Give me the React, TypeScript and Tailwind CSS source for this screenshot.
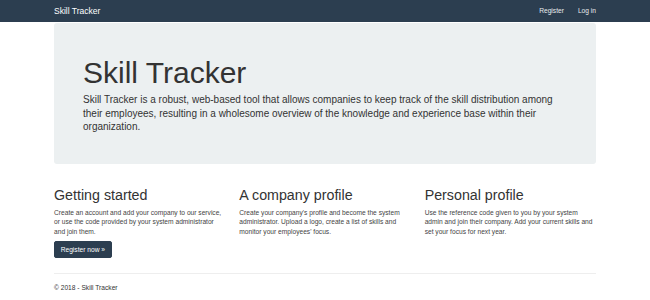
import React from "react";

export default function App() {
  const font = { fontFamily: '"Liberation Sans", Arial, Helvetica, sans-serif' };
  return (
    <div className="min-h-[300px] bg-white text-[#333]" style={font}>
      <nav className="h-[22px] bg-[#2c3e50]">
        <div className="mx-auto flex h-full w-[542px] items-center justify-between">
          <span className="text-[8.5px] leading-none text-white">Skill Tracker</span>
          <div className="flex items-center gap-[14px] text-[6.65px] leading-none text-[#e8ebee]">
            <span>Register</span>
            <span>Log in</span>
          </div>
        </div>
      </nav>
      <div className="mx-auto w-[542px]">
        <div className="mt-[1px] mb-[14px] rounded-[3px] bg-[#ecf0f1] px-[29px] pt-[23px] pb-[23px]">
          <h1 className="mt-[9.5px] mb-[4.75px] text-[30px] leading-[1.1] font-normal text-[#333]">
            Skill Tracker
          </h1>
          <p className="mb-[7px] text-[10px] leading-[13.6px] text-[#333]">
            Skill Tracker is a robust, web-based tool that allows companies to keep track of the skill distribution among
            their employees, resulting in a wholesome overview of the knowledge and experience base within their
            organization.
          </p>
        </div>
        <div className="mx-[-7px] grid grid-cols-3">
          <div className="px-[7px]">
            <h2 className="mt-[9.5px] mb-[4.75px] text-[14.25px] leading-[1.1] font-normal text-[#333]">
              Getting started
            </h2>
            <p className="mb-[4.75px] text-[6.65px] leading-[9.5px] text-[#444]">
              Create an account and add your company to our service, or use the code provided by your system administrator
              and join them.
            </p>
            <p className="mb-[4.75px] text-[6.65px] leading-[9.5px]">
              <span className="inline-block rounded-[2px] border border-[#2c3e50] bg-[#2c3e50] px-[5.7px] py-[2.85px] text-white">
                Register now »
              </span>
            </p>
          </div>
          <div className="px-[7px]">
            <h2 className="mt-[9.5px] mb-[4.75px] text-[14.25px] leading-[1.1] font-normal text-[#333]">
              A company profile
            </h2>
            <p className="mb-[4.75px] text-[6.65px] leading-[9.5px] text-[#444]">
              Create your company's profile and become the system administrator. Upload a logo, create a list of skills and
              monitor your employees' focus.
            </p>
          </div>
          <div className="px-[7px]">
            <h2 className="mt-[9.5px] mb-[4.75px] text-[14.25px] leading-[1.1] font-normal text-[#333]">
              Personal profile
            </h2>
            <p className="mb-[4.75px] text-[6.65px] leading-[9.5px] text-[#444]">
              Use the reference code given to you by your system admin and join their company. Add your current skills and
              set your focus for next year.
            </p>
          </div>
        </div>
        <hr className="mt-[9.5px] mb-[9.5px] border-0 border-t border-[#eee]" />
        <footer>
          <p className="text-[6.65px] leading-[9.5px] text-[#333]">© 2018 - Skill Tracker</p>
        </footer>
      </div>
    </div>
  );
}
